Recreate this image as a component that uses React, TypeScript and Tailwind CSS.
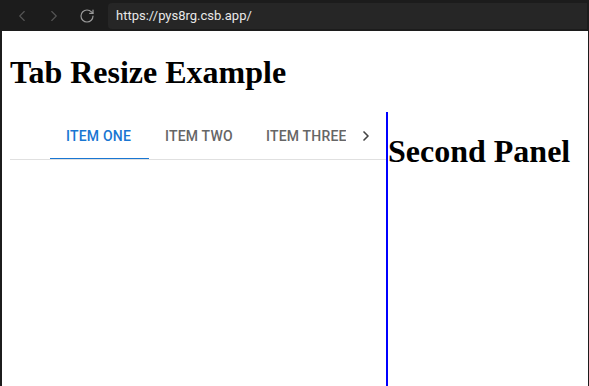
import React, { useState } from "react";
import { ChevronLeft, ChevronRight, RotateCw } from "lucide-react";

const tabs = [
    { label: "Item One", w: "w-[99px]" },
    { label: "Item Two", w: "w-[101px]" },
    { label: "Item Three", w: "w-[112px]" },
];

export default function App() {
    const [active, setActive] = useState(0);

    return (
        <div className="h-[386px] w-[589px] flex flex-col bg-[#1c1c1c] overflow-hidden">
            {/* ── Browser chrome ── */}
            <div className="h-[31px] flex items-center shrink-0">
                <div className="flex items-center gap-[14px] pl-[13px] pr-[12px]">
                    <ChevronLeft className="w-[18px] h-[18px] text-[#555]" strokeWidth={1.5} />
                    <ChevronRight className="w-[18px] h-[18px] text-[#555]" strokeWidth={1.5} />
                    <RotateCw className="w-[16px] h-[16px] text-[#9a9a9a] ml-[2px]" strokeWidth={1.8} />
                </div>
                <div className="flex-1 h-[26px] ml-[1px] mr-[2px] rounded-l-[4px] bg-[#262626] flex items-center pl-[8px]">
                    <span className="text-[13px] text-[#e8e8e8]" style={{ fontFamily: "Roboto, sans-serif" }}>
                        https://pys8rg.csb.app/
                    </span>
                </div>
            </div>

            {/* ── Page ── */}
            <div className="flex-1 flex min-h-0">
                <div className="w-[2px] shrink-0" />
                <div className="flex-1 bg-white px-2 flex flex-col min-h-0 overflow-hidden" style={{ fontFamily: "'Liberation Serif', serif" }}>
                    <h1 className="text-[32px] font-bold leading-[37px] mt-[23px] mb-[21px] text-black">Tab Resize Example</h1>

                    <div className="flex flex-1 min-h-0">
                        <div className="w-[378px] shrink-0 border-r-2 border-[#0000ff]">
                            <div className="flex h-[48px] border-b border-[#e0e0e0]" style={{ fontFamily: "Roboto, sans-serif" }}>
                                <div className="w-[40px] shrink-0" />
                                <div className="flex-1 flex overflow-hidden">
                                    {tabs.map((t, i) => (
                                        <button
                                            key={t.label}
                                            onClick={() => setActive(i)}
                                            className={`relative shrink-0 ${t.w} pl-4 text-left h-[48px] text-[14px] font-medium uppercase tracking-[0.2px] whitespace-nowrap ${active === i ? "text-[#1976d2]" : "text-[#666666]"}`}
                                        >
                                            {t.label}
                                            {active === i && <span className="absolute left-0 right-0 bottom-0 h-[2px] bg-[#1976d2]" />}
                                        </button>
                                    ))}
                                </div>
                                <div className="w-[40px] shrink-0 flex items-center justify-center">
                                    <ChevronRight className="w-[16px] h-[16px] text-[#444]" strokeWidth={2.5} />
                                </div>
                            </div>
                        </div>
                        <div className="flex-1">
                            <h1 className="text-[32px] font-bold leading-[37px] mt-[21px] text-black whitespace-nowrap">Second Panel</h1>
                        </div>
                    </div>
                </div>
                <div className="w-[1px] shrink-0" />
            </div>
        </div>
    );
}
